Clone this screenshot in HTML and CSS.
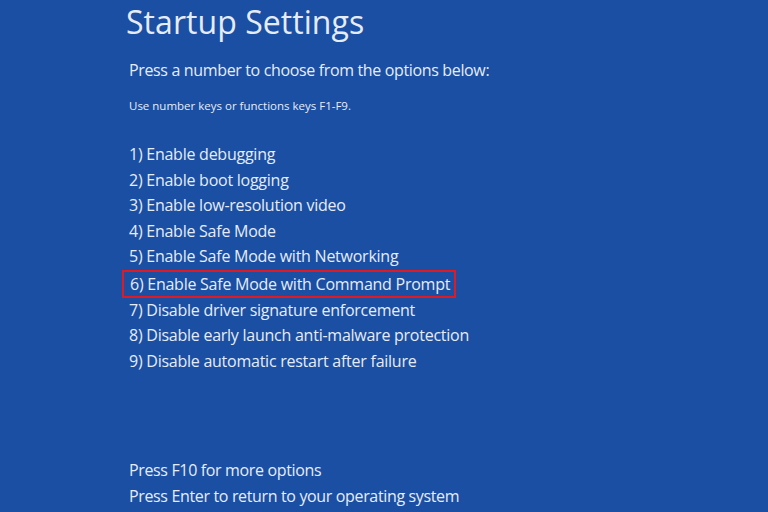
FILE: index.html
```html
<!DOCTYPE html>
<html>
<head>
<meta charset="utf-8">
<link rel="stylesheet" href="styles.css">
</head>
<body>
<main class="screen">
  <h1 class="title">Startup Settings</h1>
  <p class="lead">Press a number to choose from the options below:</p>
  <p class="hint">Use number keys or functions keys F1-F9.</p>
  <ul class="options">
    <li>1) Enable debugging</li>
    <li>2) Enable boot logging</li>
    <li>3) Enable low-resolution video</li>
    <li>4) Enable Safe Mode</li>
    <li>5) Enable Safe Mode with Networking</li>
    <li class="selected">6) Enable Safe Mode with Command Prompt</li>
    <li>7) Disable driver signature enforcement</li>
    <li>8) Disable early launch anti-malware protection</li>
    <li>9) Disable automatic restart after failure</li>
  </ul>
  <div class="footer">
    <p>Press F10 for more options</p>
    <p>Press Enter to return to your operating system</p>
  </div>
</main>
</body>
</html>
```
FILE: styles.css
```css
html, body {
  margin: 0;
  padding: 0;
  width: 768px;
  height: 512px;
  overflow: hidden;
  background: #1a4fa3;
}
.screen {
  box-sizing: border-box;
  height: 512px;
  padding: 0 0 0 129px;
  color: #e6ecf6;
  font-family: "Open Sans", "Noto Sans", sans-serif;
  display: flex;
  flex-direction: column;
}
.title {
  margin: 0;
  padding-top: 2px;
  margin-left: -3px;
  font-weight: 400;
  font-size: 32px;
  line-height: 40px;
  letter-spacing: 0.05px;
}
.lead {
  margin: 18px 0 0;
  font-size: 16px;
  line-height: 20px;
  letter-spacing: -0.35px;
}
.hint {
  margin: 19px 0 0;
  font-size: 11.5px;
  line-height: 14px;
}
.options {
  list-style: none;
  margin: 29px 0 0;
  padding: 0;
  font-size: 16px;
  line-height: 25.5px;
  letter-spacing: -0.25px;
}
.options li {
  white-space: nowrap;
}
.selected {
  display: inline-block;
  margin-left: -7px;
  padding: 0 4px 0 6px;
  border: 2px solid #e01a22;
  line-height: 24px;
}
.footer {
  margin-top: auto;
  padding-bottom: 3px;
  font-size: 16px;
  line-height: 26px;
  letter-spacing: -0.35px;
}
.footer p {
  margin: 0;
}
```
